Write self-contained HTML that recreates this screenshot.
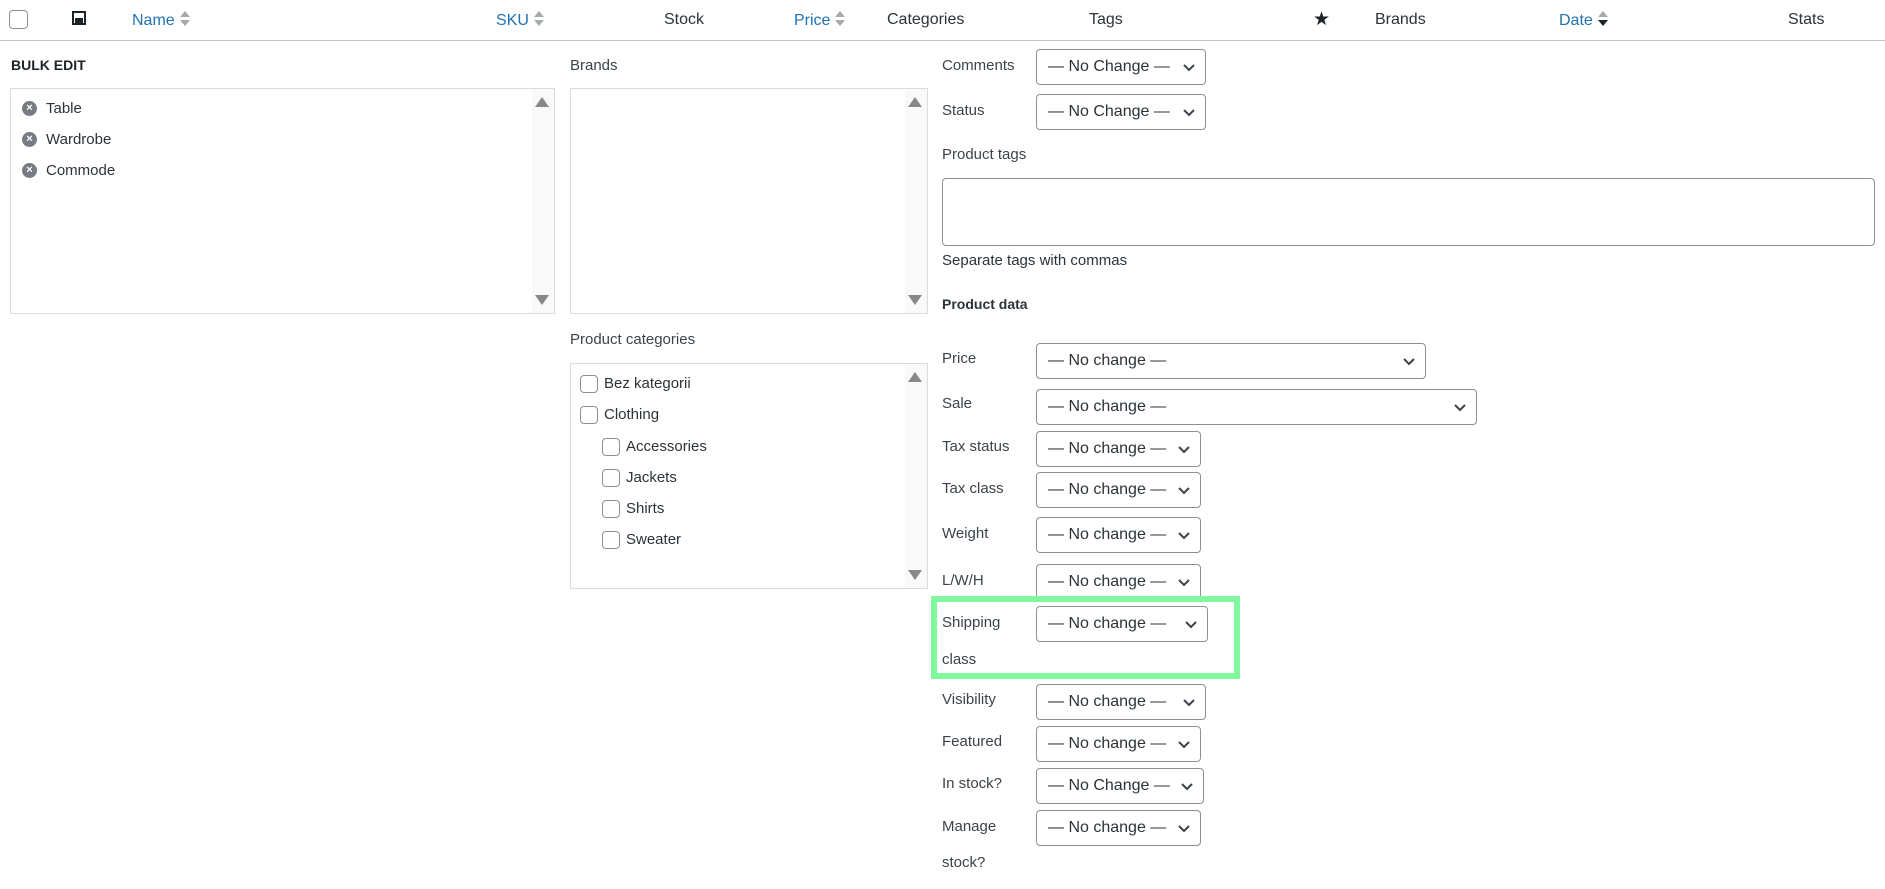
<!DOCTYPE html>
<html><head><meta charset="utf-8"><style>
*{box-sizing:border-box}
body{margin:0;width:1885px;height:889px;background:#fff;font-family:"Liberation Sans",sans-serif;color:#3c434a;position:relative;overflow:hidden}
.a{position:absolute;white-space:nowrap}
.h{font-size:16px;color:#2c3338;top:11px}
.blue{color:#2271b1}
.sort{display:inline-block;width:10px;height:16px;position:relative;vertical-align:-2px;margin-left:5px}
.sort:before{content:"";position:absolute;left:0;top:0;border:5px solid transparent;border-bottom:6px solid #a7aaad;border-top:0}
.sort:after{content:"";position:absolute;left:0;top:9px;border:5px solid transparent;border-top:6px solid #a7aaad;border-bottom:0}
.sort.d:after{border-top-color:#1d2327}
.lbl{font-size:15px;color:#3c434a;left:942px}
.box{position:absolute;border:1px solid #dcdcde;background:#fff}
.sb{position:absolute;right:0;top:0;bottom:0;width:22px;background:#f9f9f9}
.up{position:absolute;right:5px;top:8px;border:7px solid transparent;border-bottom:10px solid #888;border-top:0}
.dn{position:absolute;right:5px;bottom:8px;border:7px solid transparent;border-top:10px solid #888;border-bottom:0}
.sel{position:absolute;left:1036px;height:36px;border:1px solid #8c8f94;border-radius:4px;font-size:16px;color:#2c3338;padding:8px 0 0 11px;white-space:nowrap;background:#fff}
.sel svg{position:absolute;right:9px;top:13px}
.cb{position:absolute;width:18px;height:18px;border:1px solid #8c8f94;border-radius:4px;background:#fff}
.it{font-size:15px;color:#2c3338}
.x{display:inline-block;width:15px;height:15px;border-radius:50%;background:#787c82;color:#fff;font-size:11px;font-weight:bold;text-align:center;line-height:15px;position:absolute;left:11px;top:1px}
</style></head><body>
<div class="cb" style="left:9px;top:10px;width:19px;height:19px"></div>
<div class="a" style="left:72px;top:11px;width:14px;height:14px;background:#1d2327;border:2px solid #1d2327"><div style="width:10px;height:10px;background:#fff;position:relative"><div style="position:absolute;left:1px;bottom:0;width:8px;height:5px;background:#1d2327"></div></div></div>
<div class="a h blue" style="left:132px">Name<span class="sort"></span></div>
<div class="a h blue" style="left:496px">SKU<span class="sort"></span></div>
<div class="a h" style="left:664px">Stock</div>
<div class="a h blue" style="left:794px">Price<span class="sort"></span></div>
<div class="a h" style="left:887px">Categories</div>
<div class="a h" style="left:1089px">Tags</div>
<div class="a h" style="left:1313px;top:8px;font-size:19px;color:#1d2327">★</div>
<div class="a h" style="left:1375px">Brands</div>
<div class="a h blue" style="left:1559px">Date<span class="sort d"></span></div>
<div class="a h" style="left:1788px">Stats</div>
<div class="a" style="left:0;top:40px;width:1885px;height:1px;background:#c3c4c7"></div>

<div class="a" style="left:11px;top:57px;font-size:14px;font-weight:bold;color:#1d2327">BULK EDIT</div>
<div class="box" style="left:10px;top:88px;width:545px;height:226px"><div class="sb"><div class="up"></div><div class="dn"></div></div>
<div class="a it" style="left:0;top:11px"><span class="x">×</span><span style="position:absolute;left:35px">Table</span></div>
<div class="a it" style="left:0;top:42px"><span class="x">×</span><span style="position:absolute;left:35px">Wardrobe</span></div>
<div class="a it" style="left:0;top:73px"><span class="x">×</span><span style="position:absolute;left:35px">Commode</span></div>
</div>

<div class="a lbl" style="left:570px;top:57px">Brands</div>
<div class="box" style="left:570px;top:88px;width:358px;height:226px"><div class="sb"><div class="up"></div><div class="dn"></div></div></div>
<div class="a lbl" style="left:570px;top:331px">Product categories</div>
<div class="box" style="left:570px;top:363px;width:358px;height:226px"><div class="sb"><div class="up"></div><div class="dn"></div></div>
<div class="cb" style="left:9px;top:11px"></div><div class="a it" style="left:33px;top:11px">Bez kategorii</div>
<div class="cb" style="left:9px;top:42px"></div><div class="a it" style="left:33px;top:42px">Clothing</div>
<div class="cb" style="left:31px;top:74px"></div><div class="a it" style="left:55px;top:74px">Accessories</div>
<div class="cb" style="left:31px;top:105px"></div><div class="a it" style="left:55px;top:105px">Jackets</div>
<div class="cb" style="left:31px;top:136px"></div><div class="a it" style="left:55px;top:136px">Shirts</div>
<div class="cb" style="left:31px;top:167px"></div><div class="a it" style="left:55px;top:167px">Sweater</div>
</div>

<div class="a lbl" style="top:57px">Comments</div>
<div class="sel" style="top:49px;width:170px">— No Change —<svg width="14" height="10"><path d="M2 2l5 5 5-5" fill="none" stroke="#3c434a" stroke-width="2"/></svg></div>
<div class="a lbl" style="top:102px">Status</div>
<div class="sel" style="top:94px;width:170px">— No Change —<svg width="14" height="10"><path d="M2 2l5 5 5-5" fill="none" stroke="#3c434a" stroke-width="2"/></svg></div>
<div class="a lbl" style="top:146px">Product tags</div>
<div class="a" style="left:942px;top:178px;width:933px;height:68px;border:1px solid #8c8f94;border-radius:4px"></div>
<div class="a lbl" style="top:252px;color:#2c3338">Separate tags with commas</div>
<div class="a lbl" style="top:296px;font-weight:bold;font-size:14px;color:#2c3338">Product data</div>

<div class="a lbl" style="top:350px">Price</div>
<div class="sel" style="top:343px;width:390px">— No change —<svg width="14" height="10"><path d="M2 2l5 5 5-5" fill="none" stroke="#3c434a" stroke-width="2"/></svg></div>
<div class="a lbl" style="top:395px">Sale</div>
<div class="sel" style="top:389px;width:441px">— No change —<svg width="14" height="10"><path d="M2 2l5 5 5-5" fill="none" stroke="#3c434a" stroke-width="2"/></svg></div>
<div class="a lbl" style="top:438px">Tax status</div>
<div class="sel" style="top:431px;width:165px">— No change —<svg width="14" height="10"><path d="M2 2l5 5 5-5" fill="none" stroke="#3c434a" stroke-width="2"/></svg></div>
<div class="a lbl" style="top:480px">Tax class</div>
<div class="sel" style="top:472px;width:165px">— No change —<svg width="14" height="10"><path d="M2 2l5 5 5-5" fill="none" stroke="#3c434a" stroke-width="2"/></svg></div>
<div class="a lbl" style="top:525px">Weight</div>
<div class="sel" style="top:517px;width:165px">— No change —<svg width="14" height="10"><path d="M2 2l5 5 5-5" fill="none" stroke="#3c434a" stroke-width="2"/></svg></div>
<div class="a lbl" style="top:572px">L/W/H</div>
<div class="sel" style="top:564px;width:165px">— No change —<svg width="14" height="10"><path d="M2 2l5 5 5-5" fill="none" stroke="#3c434a" stroke-width="2"/></svg></div>
<div class="a" style="left:931px;top:596px;width:309px;height:83px;border:6px solid #80f99e"></div>
<div class="a lbl" style="top:614px">Shipping</div>
<div class="a lbl" style="top:651px">class</div>
<div class="sel" style="top:606px;width:172px">— No change —<svg width="14" height="10"><path d="M2 2l5 5 5-5" fill="none" stroke="#3c434a" stroke-width="2"/></svg></div>
<div class="a lbl" style="top:691px">Visibility</div>
<div class="sel" style="top:684px;width:170px">— No change —<svg width="14" height="10"><path d="M2 2l5 5 5-5" fill="none" stroke="#3c434a" stroke-width="2"/></svg></div>
<div class="a lbl" style="top:733px">Featured</div>
<div class="sel" style="top:726px;width:165px">— No change —<svg width="14" height="10"><path d="M2 2l5 5 5-5" fill="none" stroke="#3c434a" stroke-width="2"/></svg></div>
<div class="a lbl" style="top:775px">In stock?</div>
<div class="sel" style="top:768px;width:168px">— No Change —<svg width="14" height="10"><path d="M2 2l5 5 5-5" fill="none" stroke="#3c434a" stroke-width="2"/></svg></div>
<div class="a lbl" style="top:818px">Manage</div>
<div class="sel" style="top:810px;width:165px">— No change —<svg width="14" height="10"><path d="M2 2l5 5 5-5" fill="none" stroke="#3c434a" stroke-width="2"/></svg></div>
<div class="a lbl" style="top:854px">stock?</div>
</body></html>
